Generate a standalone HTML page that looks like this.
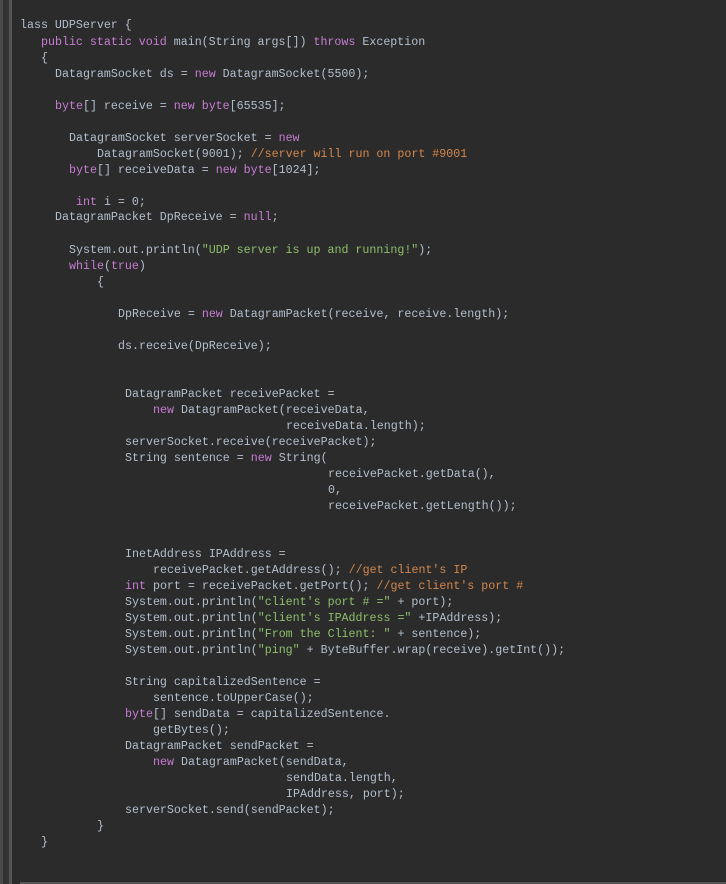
<!DOCTYPE html>
<html><head><style>
body{margin:0;width:726px;height:884px;background:#2b2b2b;overflow:hidden;position:relative;font-family:"Liberation Mono",monospace;font-size:11.65px;color:#b4bfcc}
.l{position:absolute;white-space:pre;line-height:16px;height:16px;margin-top:2px}
.k{color:#c77dd3}.s{color:#8fbf6a}.c{color:#d3874c}
#b1{position:absolute;left:0;top:0;width:3px;height:884px;background:#4a4a4a}
#b2{position:absolute;left:3px;top:0;width:6px;height:884px;background:#333}
#b3{position:absolute;left:9px;top:0;width:3px;height:884px;background:#555}
#bb{position:absolute;left:20px;top:882px;width:706px;height:2px;background:#555}
</style></head><body>
<div id="b1"></div><div id="b2"></div><div id="b3"></div><div id="bb"></div>
<div class="l" style="left:20px;top:16px">lass UDPServer {</div>
<div class="l" style="left:41px;top:33px"><span class="k">public static void</span> main(String args[]) <span class="k">throws</span> Exception</div>
<div class="l" style="left:41px;top:49px">{</div>
<div class="l" style="left:55px;top:65px">DatagramSocket ds = <span class="k">new</span> DatagramSocket(5500);</div>
<div class="l" style="left:55px;top:97px"><span class="k">byte</span>[] receive = <span class="k">new byte</span>[65535];</div>
<div class="l" style="left:69px;top:129px">DatagramSocket serverSocket = <span class="k">new</span></div>
<div class="l" style="left:97px;top:145px">DatagramSocket(9001); <span class="c">//server will run on port #9001</span></div>
<div class="l" style="left:69px;top:161px"><span class="k">byte</span>[] receiveData = <span class="k">new byte</span>[1024];</div>
<div class="l" style="left:76px;top:193px"><span class="k">int</span> i = 0;</div>
<div class="l" style="left:55px;top:208px">DatagramPacket DpReceive = <span class="k">null</span>;</div>
<div class="l" style="left:69px;top:241px">System.out.println(<span class="s">"UDP server is up and running!"</span>);</div>
<div class="l" style="left:69px;top:257px"><span class="k">while</span>(<span class="k">true</span>)</div>
<div class="l" style="left:97px;top:273px">{</div>
<div class="l" style="left:118px;top:305px">DpReceive = <span class="k">new</span> DatagramPacket(receive, receive.length);</div>
<div class="l" style="left:118px;top:337px">ds.receive(DpReceive);</div>
<div class="l" style="left:125px;top:385px">DatagramPacket receivePacket =</div>
<div class="l" style="left:153px;top:401px"><span class="k">new</span> DatagramPacket(receiveData,</div>
<div class="l" style="left:286px;top:417px">receiveData.length);</div>
<div class="l" style="left:125px;top:433px">serverSocket.receive(receivePacket);</div>
<div class="l" style="left:125px;top:449px">String sentence = <span class="k">new</span> String(</div>
<div class="l" style="left:328px;top:465px">receivePacket.getData(),</div>
<div class="l" style="left:328px;top:481px">0,</div>
<div class="l" style="left:328px;top:497px">receivePacket.getLength());</div>
<div class="l" style="left:125px;top:545px">InetAddress IPAddress =</div>
<div class="l" style="left:153px;top:561px">receivePacket.getAddress(); <span class="c">//get client's IP</span></div>
<div class="l" style="left:125px;top:577px"><span class="k">int</span> port = receivePacket.getPort(); <span class="c">//get client's port #</span></div>
<div class="l" style="left:125px;top:593px">System.out.println(<span class="s">"client's port # ="</span> + port);</div>
<div class="l" style="left:125px;top:609px">System.out.println(<span class="s">"client's IPAddress ="</span> +IPAddress);</div>
<div class="l" style="left:125px;top:625px">System.out.println(<span class="s">"From the Client: "</span> + sentence);</div>
<div class="l" style="left:125px;top:641px">System.out.println(<span class="s">"ping"</span> + ByteBuffer.wrap(receive).getInt());</div>
<div class="l" style="left:125px;top:673px">String capitalizedSentence =</div>
<div class="l" style="left:153px;top:689px">sentence.toUpperCase();</div>
<div class="l" style="left:125px;top:705px"><span class="k">byte</span>[] sendData = capitalizedSentence.</div>
<div class="l" style="left:153px;top:721px">getBytes();</div>
<div class="l" style="left:125px;top:737px">DatagramPacket sendPacket =</div>
<div class="l" style="left:153px;top:753px"><span class="k">new</span> DatagramPacket(sendData,</div>
<div class="l" style="left:286px;top:769px">sendData.length,</div>
<div class="l" style="left:286px;top:785px">IPAddress, port);</div>
<div class="l" style="left:125px;top:801px">serverSocket.send(sendPacket);</div>
<div class="l" style="left:97px;top:817px">}</div>
<div class="l" style="left:41px;top:833px">}</div>
</body></html>
